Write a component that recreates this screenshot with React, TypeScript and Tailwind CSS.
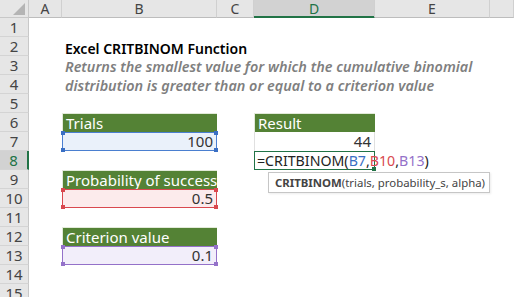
const cols = ["A", "B", "C", "D", "E", ""];
const colW = "grid-cols-[29px_33px_155px_37px_121px_115px_1fr]";

function Corner() {
  return (
    <div className="relative h-[18px] border-b border-r border-[#c8c8c8] bg-[#e6e6e6]">
      <div className="absolute bottom-[2px] right-[3px] h-0 w-0 border-b-[12px] border-l-[12px] border-b-[#b4b4b4] border-l-transparent" />
    </div>
  );
}

function ColHead({ label }: { label: string }) {
  const active = label === "D";
  return (
    <div
      className={`flex h-[18px] items-center justify-center border-b border-r border-r-[#d0d0d0] text-[14px] leading-[17px] ${
        active
          ? "border-b-[#217346] bg-[#d2d2d2] text-[#217346] shadow-[inset_0_-1px_0_#217346]"
          : "border-b-[#bdbdbd] bg-[#e6e6e6] text-[#444]"
      }`}
    >
      {label}
    </div>
  );
}

function GreenHead({ text }: { text: string }) {
  return (
    <div className="flex h-full items-end whitespace-nowrap border-l border-t border-[#e2ead9] bg-[#548235] pl-[3px] text-[15px] leading-[18px] text-white">
      {text}
    </div>
  );
}

function RefBox({ value, border, bg, handle }: { value: string; border: string; bg: string; handle: string }) {
  const sq = `absolute h-[4px] w-[4px] ${handle}`;
  return (
    <div className={`relative flex h-full items-center justify-end border ${border} ${bg} pr-[3px] text-[15px] text-[#333]`}>
      {value}
      <div className={`${sq} -left-[2px] -top-[2px]`} />
      <div className={`${sq} -right-[2px] -top-[2px]`} />
      <div className={`${sq} -bottom-[2px] -left-[2px]`} />
      <div className={`${sq} -bottom-[2px] -right-[2px]`} />
    </div>
  );
}

function cellContent(row: number, col: number) {
  if (col === 2) {
    if (row === 2)
      return <div className="whitespace-nowrap pl-[3px] pt-[1px] text-[14px] font-semibold text-black">Excel CRITBINOM Function</div>;
    if (row === 3)
      return (
        <div className="whitespace-nowrap pl-[3px] text-[14.4px] font-semibold italic text-[#7f7f7f]">
          Returns the smallest value for which the cumulative binomial
        </div>
      );
    if (row === 4)
      return (
        <div className="whitespace-nowrap pl-[3px] text-[14.4px] font-semibold italic text-[#7f7f7f]">
          distribution is greater than or equal to a criterion value
        </div>
      );
    if (row === 6) return <GreenHead text="Trials" />;
    if (row === 7) return <RefBox value="100" border="border-[#4a7fd0]" bg="bg-[#eaf1fa]" handle="bg-[#3a6fc4]" />;
    if (row === 9) return <GreenHead text="Probability of success" />;
    if (row === 10) return <RefBox value="0.5" border="border-[#d9484f]" bg="bg-[#fcebec]" handle="bg-[#d9484f]" />;
    if (row === 12) return <GreenHead text="Criterion value" />;
    if (row === 13) return <RefBox value="0.1" border="border-[#9471c9]" bg="bg-[#f2eefa]" handle="bg-[#9471c9]" />;
  }
  if (col === 4) {
    if (row === 6) return <GreenHead text="Result" />;
    if (row === 7)
      return (
        <div className="flex h-full items-center justify-end border-x border-[#e0e0e0] pr-[3px] text-[15px] text-[#333]">44</div>
      );
    if (row === 8)
      return (
        <div className="relative flex h-full items-center whitespace-nowrap border border-[#217346] pl-[2px] text-[14.2px] text-[#222]">
          <span>=CRITBINOM(</span>
          <span className="text-[#3a6fc4]">B7</span>
          <span>,</span>
          <span className="text-[#d9484f]">B10</span>
          <span>,</span>
          <span className="text-[#9471c9]">B13</span>
          <span>)</span>
          <div className="absolute -bottom-[2px] -right-[2px] h-[4px] w-[4px] bg-[#217346]" />
          <div className="absolute left-[13px] top-[20px] z-10 flex h-[21px] w-[222px] items-center border border-[#c6c6c6] bg-white pl-[6px] text-[11.4px] text-[#444] shadow-[1px_1px_2px_rgba(0,0,0,0.08)]">
            <span className="font-bold">CRITBINOM</span>
            <span>(trials, probability_s, alpha)</span>
          </div>
        </div>
      );
  }
  return null;
}

export default function App() {
  const rows = Array.from({ length: 15 }, (_, i) => i + 1);
  return (
    <div className="h-[297px] w-[514px] overflow-hidden bg-white font-['Noto_Sans','Open_Sans',sans-serif]">
      <div className={`grid ${colW}`}>
        <Corner />
        {cols.map((c, i) => (
          <ColHead key={i} label={c} />
        ))}
      </div>
      {rows.map((r) => (
        <div key={r} className={`grid h-[19px] ${colW}`}>
          <div
            className={`flex items-center justify-center border-b border-[#d4d4d4] text-[15px] leading-none ${
              r === 8 ? "border-r-2 border-r-[#217346] bg-[#d2d2d2] text-[#217346]" : "border-r border-r-[#c8c8c8] bg-[#e6e6e6] text-[#444]"
            }`}
          >
            {r}
          </div>
          {cols.map((_, ci) => (
            <div key={ci} className="h-[19px] min-w-0 overflow-visible">
              {cellContent(r, ci + 1)}
            </div>
          ))}
        </div>
      ))}
    </div>
  );
}
